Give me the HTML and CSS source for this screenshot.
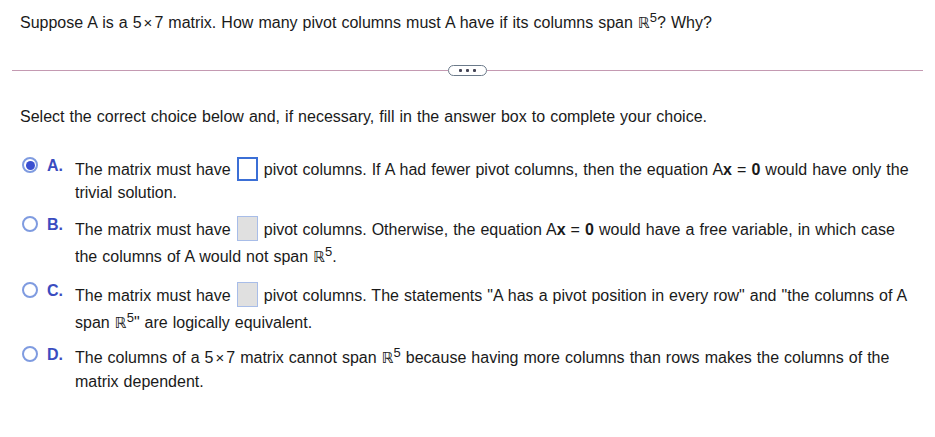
FILE: index.html
```html
<!DOCTYPE html>
<html>
<head>
<meta charset="utf-8">
<link rel="stylesheet" href="styles.css">
</head>
<body>
<div class="page">
  <p class="question">Suppose A is a 5<span class="times">×</span>7 matrix. How many pivot columns must A have if its columns span <span class="bb">ℝ</span><sup class="flat">5</sup>? Why?</p>
  <div class="sep">
    <span class="line"></span>
    <span class="pill"><i></i><i></i><i></i></span>
    <span class="line"></span>
  </div>
  <p class="instr">Select the correct choice below and, if necessary, fill in the answer box to complete your choice.</p>
  <div class="options">
    <div class="opt">
      <span class="radio sel"></span>
      <span class="letter">A.</span>
      <div class="txt">The matrix must have <span class="box active"></span> pivot columns. If A had fewer pivot columns, then the equation A<b>x</b> = <b>0</b> would have only the trivial solution.</div>
    </div>
    <div class="opt">
      <span class="radio"></span>
      <span class="letter">B.</span>
      <div class="txt">The matrix must have <span class="box"></span> pivot columns. Otherwise, the equation A<b>x</b> = <b>0</b> would have a free variable, in which case the columns of A would not span <span class="bb">ℝ</span><sup>5</sup>.</div>
    </div>
    <div class="opt opt-c">
      <span class="radio"></span>
      <span class="letter">C.</span>
      <div class="txt">The matrix must have <span class="box"></span> pivot columns. The statements "A has a pivot position in every row" and "the columns of A span <span class="bb">ℝ</span><sup>5</sup>" are logically equivalent.</div>
    </div>
    <div class="opt opt-d">
      <span class="radio"></span>
      <span class="letter">D.</span>
      <div class="txt">The columns of a 5<span class="times">×</span>7 matrix cannot span <span class="bb">ℝ</span><sup class="flat">5</sup> because having more columns than rows makes the columns of the matrix dependent.</div>
    </div>
  </div>
</div>
</body>
</html>
```

FILE: styles.css
```css
html, body {
  margin: 0;
  padding: 0;
  background: #ffffff;
}
body {
  font-family: "Liberation Sans", Arial, sans-serif;
  font-size: 16px;
  color: #1a1a1a;
  word-spacing: 0.6px;
}
.page {
  padding: 13px 12px 0 12px;
}
.question {
  margin: 0;
  padding-left: 8px;
  line-height: 20px;
}
sup {
  font-size: 13px;
  line-height: 21px;
  vertical-align: 6px;
}
sup.flat {
  line-height: 0;
}
.bb {
  font-family: "DejaVu Sans", sans-serif;
  font-size: 15px;
}
.times {
  font-size: 15px;
  padding: 0 2px;
}
.sep {
  display: flex;
  align-items: center;
  margin-top: 31px;
  height: 13px;
}
.line {
  flex: 1;
  height: 1px;
  background: #c49ab2;
}
.pill {
  width: 37px;
  height: 9px;
  border: 1px solid #6b7a8a;
  border-radius: 6px;
  display: flex;
  align-items: center;
  justify-content: center;
  gap: 4px;
  background: #fff;
}
.pill i {
  width: 3px;
  height: 3px;
  background: #445;
  border-radius: 1px;
}
.instr {
  margin: 30px 0 0 8px;
  line-height: 20px;
}
.options {
  margin-top: 30px;
  display: flex;
  flex-direction: column;
  gap: 12px;
}
.opt {
  display: flex;
  align-items: flex-start;
  padding-left: 10px;
}
.opt-c {
  margin-top: 1px;
}
.opt-d {
  margin-top: -1px;
}
.radio {
  flex: none;
  width: 12px;
  height: 12px;
  border: 2px solid #7f9be0;
  border-radius: 50%;
  margin-top: 0;
  position: relative;
  background: #fff;
}
.radio.sel::after {
  content: "";
  position: absolute;
  left: 1.5px;
  top: 1.5px;
  width: 9px;
  height: 9px;
  border-radius: 50%;
  background: #3a4fd0;
}
.letter {
  flex: none;
  width: 28px;
  margin-left: 9px;
  font-weight: bold;
  color: #3a4cc0;
  line-height: 18px;
}
.txt {
  flex: 1;
  line-height: 23px;
  padding-right: 10px;
}
.box {
  display: inline-block;
  box-sizing: border-box;
  width: 21px;
  height: 25px;
  border: 1px solid #a8bde8;
  background: #e0e0e0;
  vertical-align: -6px;
  margin: 0 1px;
}
.box.active {
  border: 2px solid #3b6fd6;
  background: #fff;
  height: 24px;
}
```
